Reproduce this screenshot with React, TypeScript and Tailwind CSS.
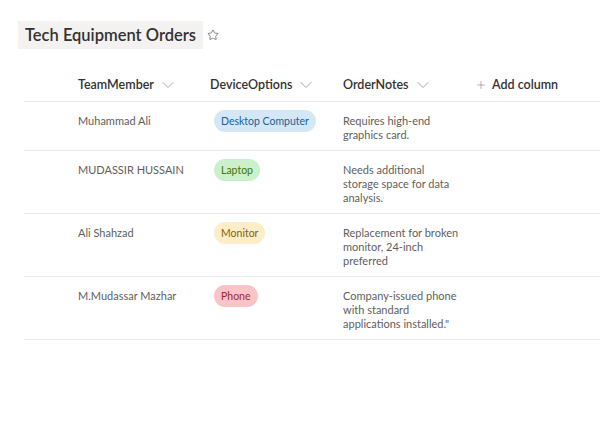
import { Star, ChevronDown, Plus } from 'lucide-react';

interface OrderRow {
  member: string;
  device: string;
  pill: string;
  notes: string[];
}

// notes are kept as the wrapped lines shown in the list
const ROWS: OrderRow[] = [
  {
    member: 'Muhammad Ali',
    device: 'Desktop Computer',
    pill: 'bg-[#d4e7f6] text-[#1a5f99]',
    notes: ['Requires high-end', 'graphics card.'],
  },
  {
    member: 'MUDASSIR HUSSAIN',
    device: 'Laptop',
    pill: 'bg-[#caf0cc] text-[#437406]',
    notes: ['Needs additional', 'storage space for data', 'analysis.'],
  },
  {
    member: 'Ali Shahzad',
    device: 'Monitor',
    pill: 'bg-[#fdeec9] text-[#8a5d00]',
    notes: ['Replacement for broken', 'monitor, 24-inch', 'preferred'],
  },
  {
    member: 'M.Mudassar Mazhar',
    device: 'Phone',
    pill: 'bg-[#f9c4c8] text-[#a4262c]',
    notes: ['Company-issued phone', 'with standard', 'applications installed."'],
  },
];

const COLS = ['TeamMember', 'DeviceOptions', 'OrderNotes'];

export default function App() {
  return (
    <div className="w-[600px] h-[433px] bg-white overflow-hidden font-['Lato',sans-serif]">
      {/* Title */}
      <div className="flex items-center pt-[21px] pl-[18px]">
        <div className="h-[28px] px-[7px] flex items-center bg-[#f3f2f1] text-[16.5px] font-semibold text-[#323130]">
          Tech Equipment Orders
        </div>
        <Star className="ml-[4px] w-[12px] h-[12px] text-[#605e5c]" strokeWidth={1.5} />
      </div>

      {/* List */}
      <div className="mt-[17px] ml-[24px]">
        <div className="grid grid-cols-[54px_132px_133px_132px_1fr] h-[36px] pt-[3px] items-center border-b border-[#edebe9] text-[12.5px] font-semibold text-[#323130]">
          <div />
          {COLS.map((c) => (
            <div key={c} className="flex items-center gap-[4px]">
              {c}
              <ChevronDown className="w-[20px] h-[20px] text-[#a19f9d]" strokeWidth={1.1} />
            </div>
          ))}
          <div className="flex items-center gap-[5px]">
            <Plus className="w-[12px] h-[12px] text-[#8a8886]" strokeWidth={1.3} />
            Add column
          </div>
        </div>

        {ROWS.map((r) => (
          <div
            key={r.member}
            className="grid grid-cols-[54px_132px_133px_132px_1fr] min-h-[49px] border-b border-[#edebe9] pt-[12px] pb-[8px] text-[11px] leading-[14px] text-[#605e5c]"
          >
            <div />
            <div>{r.member}</div>
            <div className="pl-[4px]">
              <span className={`-mt-[4px] inline-flex items-center h-[22px] px-[7px] text-[10.5px] rounded-full ${r.pill}`}>
                {r.device}
              </span>
            </div>
            <div className="whitespace-nowrap">
              {r.notes.map((line) => (
                <div key={line}>{line}</div>
              ))}
            </div>
            <div />
          </div>
        ))}
      </div>
    </div>
  );
}
